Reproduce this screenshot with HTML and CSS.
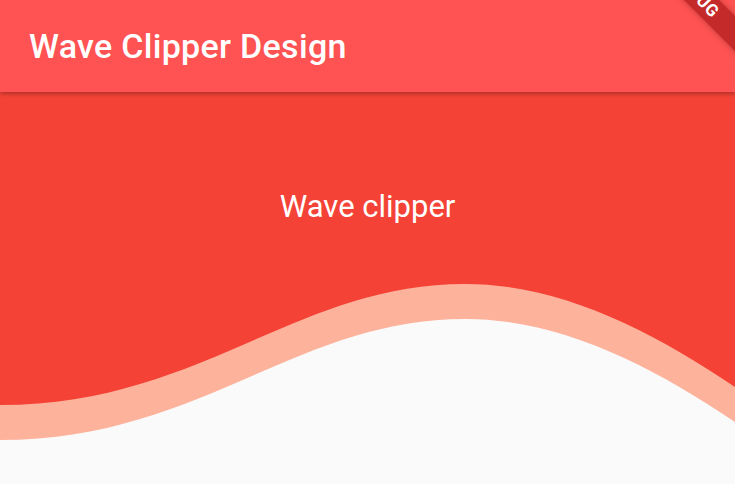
FILE: index.html
```html
<!DOCTYPE html>
<html>
<head>
<meta charset="utf-8">
<link rel="stylesheet" href="styles.css">
</head>
<body>
<div class="screen">
  <header class="appbar">
    <h1 class="title">Wave Clipper Design</h1>
  </header>
  <main class="content">
    <p class="label">Wave clipper</p>
    <svg class="wave" width="735" height="200" viewBox="0 0 735 200" preserveAspectRatio="none">
      <path class="wave-back" d="M0,121 C200,121 295,0 465,0 C560,0 650,46 735,103 L735,200 L0,200 Z"/>
      <path class="wave-front" d="M0,156 C200,156 295,35 465,35 C560,35 650,81 735,138 L735,200 L0,200 Z"/>
    </svg>
  </main>
  <div class="banner">DEBUG</div>
</div>
</body>
</html>
```
FILE: styles.css
```css
html, body {
  margin: 0;
  padding: 0;
  background: #fafafa;
}
.screen {
  width: 735px;
  height: 484px;
  overflow: hidden;
  position: relative;
  display: flex;
  flex-direction: column;
  font-family: Roboto, "Liberation Sans", sans-serif;
}
.appbar {
  height: 92px;
  flex: 0 0 92px;
  background: #ff5252;
  display: flex;
  align-items: center;
  padding-left: 29px;
  box-shadow: 0 2px 4px rgba(0, 0, 0, 0.28);
  position: relative;
  z-index: 1;
}
.title {
  margin: 0;
  color: #fff;
  font-size: 34px;
  font-weight: 500;
  letter-spacing: 0.3px;
  line-height: 1;
}
.content {
  height: 392px;
  background: #f44336;
  display: flex;
  flex-direction: column;
  align-items: center;
}
.label {
  margin: 99px 0 0;
  color: #fff;
  font-size: 31px;
  font-weight: 400;
  line-height: 31px;
}
.wave {
  display: block;
  margin-top: auto;
  width: 735px;
  height: 200px;
}
.wave-back { fill: #fdb29c; }
.wave-front { fill: #fafafa; }
.banner {
  position: absolute;
  left: 596px;
  top: -18px;
  width: 200px;
  height: 25px;
  transform: rotate(45deg);
  background: rgba(170, 24, 24, 0.68);
  box-shadow: 0 0 6px rgba(0, 0, 0, 0.25);
  color: #fff;
  font-size: 17px;
  font-weight: 700;
  line-height: 25px;
  text-align: center;
  letter-spacing: 0.5px;
  z-index: 2;
}
```
